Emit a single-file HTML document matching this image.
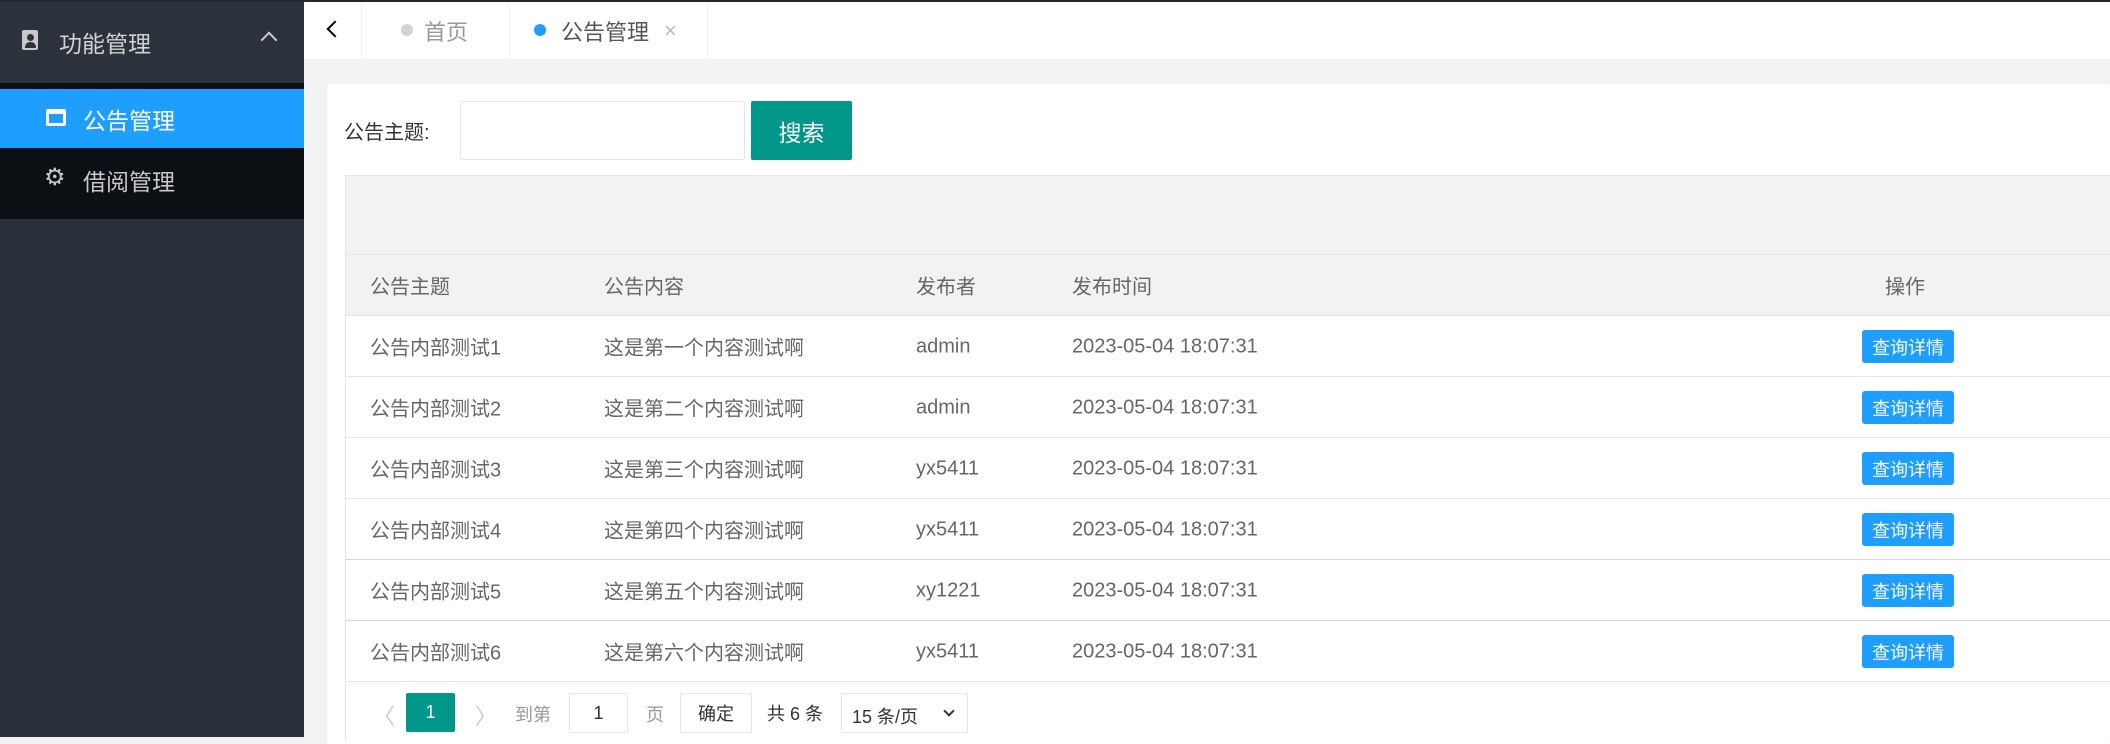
<!DOCTYPE html>
<html><head><meta charset="utf-8"><style>
*{margin:0;padding:0;box-sizing:border-box}
body{width:2110px;height:737px;overflow:hidden;background:#f2f2f2;font-family:"Liberation Sans","Noto Sans CJK SC",sans-serif;position:relative;color:#666}
.abs{position:absolute}
#side{left:0;top:0;width:304px;height:737px;background:#28313b}
.top{left:0;top:0;width:2110px;height:2px;background:#23262e;z-index:5}
.row{position:absolute;left:345px;right:0;height:61px;border-top:1px solid #e6e6e6;background:#fff;font-size:20px;color:#666}
.row span{position:absolute;top:50%;transform:translateY(-50%);white-space:nowrap}
.row span.l{margin-top:1px}
.btn{position:absolute;width:92px;height:33px;top:14px;background:#1e9fff;color:#fff;font-size:18px;border-radius:3px;display:flex;align-items:center;justify-content:center}
</style></head><body>
<div class="abs top"></div>
<div class="abs" id="side">
  <div class="abs" style="left:0;top:0;width:304px;height:83px;background:#2b323c"></div>
  <div class="abs" style="left:22px;top:30px;width:16px;height:20px;background:#c8c8c8;border-radius:2px"></div>
  <div class="abs" style="left:27px;top:34px;width:7px;height:7px;background:#2b323c;border-radius:50%"></div>
  <div class="abs" style="left:25px;top:42px;width:11px;height:6px;background:#2b323c;border-radius:5px 5px 0 0"></div>
  <div class="abs" style="left:59px;top:25px;font-size:23px;color:#d2d2d2">功能管理</div>
  <div class="abs" style="left:263px;top:34px;width:12px;height:12px;border-left:2px solid #ccc;border-top:2px solid #ccc;transform:rotate(45deg)"></div>
  <div class="abs" style="left:0;top:83px;width:304px;height:136px;background:#0c0f13"></div>
  <div class="abs" style="left:0;top:89px;width:304px;height:59px;background:#1e9fff"></div>
  <div class="abs" style="left:46px;top:109px;width:20px;height:17px;border:3px solid #fff;border-top-width:5px;border-radius:2px"></div>
  <div class="abs" style="left:83px;top:102px;font-size:23px;color:#fff">公告管理</div>
  <div class="abs" style="left:44px;top:163px;font-size:24px;color:#c8c8c8;font-family:'DejaVu Sans',sans-serif">⚙</div>
  <div class="abs" style="left:83px;top:163px;font-size:23px;color:#c8c8c8">借阅管理</div>
</div>
<div class="abs" style="left:304px;top:2px;right:0;height:57px;background:#fff"></div>
<div class="abs" style="left:361px;top:2px;width:1px;height:57px;background:#f0f0f0"></div>
<div class="abs" style="left:509px;top:2px;width:1px;height:57px;background:#f0f0f0"></div>
<div class="abs" style="left:707px;top:2px;width:1px;height:57px;background:#f0f0f0"></div>
<div class="abs" style="left:329px;top:23px;width:12px;height:12px;border-left:2px solid #000;border-bottom:2px solid #000;transform:rotate(45deg)"></div>
<div class="abs" style="left:401px;top:24px;width:12px;height:12px;border-radius:50%;background:#d2d2d2"></div>
<div class="abs" style="left:424px;top:15px;font-size:22px;color:#999">首页</div>
<div class="abs" style="left:534px;top:24px;width:12px;height:12px;border-radius:50%;background:#1e9fff"></div>
<div class="abs" style="left:561px;top:15px;font-size:22px;color:#555">公告管理</div>
<div class="abs" style="left:664px;top:18px;font-size:22px;color:#bbb">×</div>
<div class="abs" style="left:327px;top:84px;right:0;height:660px;background:#fff;border-radius:3px"></div>
<div class="abs" style="left:344px;top:116px;font-size:20px;color:#333">公告主题:</div>
<div class="abs" style="left:460px;top:101px;width:285px;height:59px;border:1px solid #e6e6e6;border-radius:2px;background:#fff"></div>
<div class="abs" style="left:751px;top:101px;width:101px;height:59px;background:#009688;border-radius:2px;color:#fff;font-size:23px;display:flex;align-items:center;justify-content:center">搜索</div>
<div class="abs" style="left:345px;top:175px;right:0;height:80px;background:#f2f2f2;border:1px solid #e6e6e6;border-right:none"></div>
<div class="row" style="top:254px;background:#f2f2f2;border-left:1px solid #e6e6e6">
  <span style="left:24px">公告主题</span><span style="left:258px">公告内容</span><span style="left:570px">发布者</span><span style="left:726px">发布时间</span><span style="left:1539px">操作</span>
</div>
<div class="row" style="top:315px;border-left:1px solid #e6e6e6"><span style="left:24px">公告内部测试1</span><span style="left:258px">这是第一个内容测试啊</span><span class="l" style="left:570px">admin</span><span class="l" style="left:726px">2023-05-04 18:07:31</span><div class="btn" style="left:1516px">查询详情</div></div>
<div class="row" style="top:376px;border-left:1px solid #e6e6e6"><span style="left:24px">公告内部测试2</span><span style="left:258px">这是第二个内容测试啊</span><span class="l" style="left:570px">admin</span><span class="l" style="left:726px">2023-05-04 18:07:31</span><div class="btn" style="left:1516px">查询详情</div></div>
<div class="row" style="top:437px;border-left:1px solid #e6e6e6"><span style="left:24px">公告内部测试3</span><span style="left:258px">这是第三个内容测试啊</span><span class="l" style="left:570px">yx5411</span><span class="l" style="left:726px">2023-05-04 18:07:31</span><div class="btn" style="left:1516px">查询详情</div></div>
<div class="row" style="top:498px;border-left:1px solid #e6e6e6"><span style="left:24px">公告内部测试4</span><span style="left:258px">这是第四个内容测试啊</span><span class="l" style="left:570px">yx5411</span><span class="l" style="left:726px">2023-05-04 18:07:31</span><div class="btn" style="left:1516px">查询详情</div></div>
<div class="row" style="top:559px;border-left:1px solid #e6e6e6;border-top-color:#d6d6d6"><span style="left:24px">公告内部测试5</span><span style="left:258px">这是第五个内容测试啊</span><span class="l" style="left:570px">xy1221</span><span class="l" style="left:726px">2023-05-04 18:07:31</span><div class="btn" style="left:1516px">查询详情</div></div>
<div class="row" style="top:620px;border-left:1px solid #e6e6e6;border-top-color:#d6d6d6"><span style="left:24px">公告内部测试6</span><span style="left:258px">这是第六个内容测试啊</span><span class="l" style="left:570px">yx5411</span><span class="l" style="left:726px">2023-05-04 18:07:31</span><div class="btn" style="left:1516px">查询详情</div></div>
<div class="row" style="top:681px;height:60px;border-left:1px solid #e6e6e6"></div>
<div class="abs" style="left:373px;top:699px;font-size:22px;color:#ccc">〈</div>
<div class="abs" style="left:406px;top:693px;width:49px;height:39px;background:#009688;border-radius:2px;color:#fff;font-size:18px;display:flex;align-items:center;justify-content:center">1</div>
<div class="abs" style="left:475px;top:699px;font-size:22px;color:#ccc">〉</div>
<div class="abs" style="left:515px;top:701px;font-size:18px;color:#999">到第</div>
<div class="abs" style="left:569px;top:693px;width:59px;height:40px;border:1px solid #e6e6e6;border-radius:2px;font-size:18px;color:#333;display:flex;align-items:center;justify-content:center">1</div>
<div class="abs" style="left:646px;top:701px;font-size:18px;color:#999">页</div>
<div class="abs" style="left:680px;top:693px;width:72px;height:40px;border:1px solid #e6e6e6;border-radius:2px;font-size:18px;color:#333;display:flex;align-items:center;justify-content:center">确定</div>
<div class="abs" style="left:767px;top:700px;font-size:18px;color:#333">共 6 条</div>
<div class="abs" style="left:841px;top:693px;width:127px;height:40px;border:1px solid #e6e6e6;border-radius:2px;font-size:18px;color:#333;padding:9px 0 0 10px">15 条/页</div>
<div class="abs" style="left:945px;top:707px;width:8px;height:8px;border-right:2px solid #333;border-bottom:2px solid #333;transform:rotate(45deg)"></div>
</body></html>
